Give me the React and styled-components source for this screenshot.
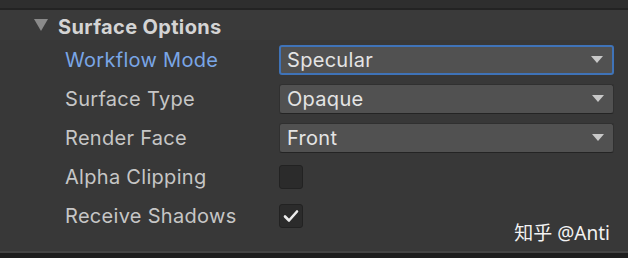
import React from "react";
import styled, { createGlobalStyle } from "styled-components";

const Global = createGlobalStyle`
  html, body { margin: 0; padding: 0; background: #383838; }
  body { font-family: Inter, "Noto Sans", "Liberation Sans", sans-serif; }
`;

const rows = [
  { label: "Workflow Mode", type: "select", value: "Specular", focused: true },
  { label: "Surface Type", type: "select", value: "Opaque" },
  { label: "Render Face", type: "select", value: "Front" },
  { label: "Alpha Clipping", type: "check", checked: false },
  { label: "Receive Shadows", type: "check", checked: true },
];

function App() {
  return (
    <>
      <Global />
      <Panel>
        <TopStrip />
        <Header>
          <Foldout />
          <Title>Surface Options</Title>
        </Header>
        <Body>
          {rows.map((r) => (
            <Row key={r.label}>
              <Label $active={r.focused}>{r.label}</Label>
              {r.type === "select" ? (
                <Select $focused={r.focused}>
                  <span>{r.value}</span>
                  <Arrow />
                </Select>
              ) : (
                <Check>
                  {r.checked && (
                    <svg width="16" height="14" viewBox="0 0 16 14">
                      <path
                        d="M2 7.5 L6 11.5 L14 2.5"
                        fill="none"
                        stroke="#ececec"
                        strokeWidth="2.6"
                        strokeLinecap="round"
                        strokeLinejoin="round"
                      />
                    </svg>
                  )}
                </Check>
              )}
            </Row>
          ))}
          <Watermark>知乎 @Anti</Watermark>
        </Body>
        <BottomStrip />
      </Panel>
    </>
  );
}

export default App;

const Panel = styled.div`
  width: 628px;
  height: 258px;
  display: flex;
  flex-direction: column;
  background: #383838;
  overflow: hidden;
`;

const TopStrip = styled.div`
  height: 8px;
  background: #2e2e2e;
  border-bottom: 2px solid #232323;
`;

const Header = styled.div`
  height: 30px;
  box-sizing: border-box;
  padding-top: 3px;
  display: flex;
  align-items: center;
  padding-left: 34px;
  background: #3a3a3a;
`;

const Foldout = styled.div`
  width: 0;
  height: 0;
  border-left: 7px solid transparent;
  border-right: 7px solid transparent;
  border-top: 12px solid #8a8a8a;
  margin-right: 10px;
  margin-top: -3px;
`;

const Title = styled.div`
  font-size: 20px;
  font-weight: 700;
  color: #d4d4d4;
  letter-spacing: 0.35px;
`;

const Body = styled.div`
  flex: 1;
  display: flex;
  flex-direction: column;
  padding: 0 14px 0 65px;
  position: relative;
`;

const Row = styled.div`
  height: 39px;
  display: flex;
  align-items: center;
`;

const Label = styled.div`
  width: 214px;
  font-size: 20px;
  letter-spacing: 0.3px;
  color: ${(p) => (p.$active ? "#7aa6e6" : "#c6c6c6")};
  white-space: nowrap;
`;

const Select = styled.div`
  flex: 1;
  height: 30px;
  box-sizing: border-box;
  display: flex;
  align-items: center;
  justify-content: space-between;
  padding: 0 9px 0 6px;
  background: #515151;
  border-radius: 3px;
  border: ${(p) => (p.$focused ? "2px solid #3f73b8" : "1px solid #303030")};
  border-bottom-color: ${(p) => (p.$focused ? "#3f73b8" : "#242424")};
  font-size: 20px;
  letter-spacing: 0.3px;
  color: #e4e4e4;
  span {
    margin-left: ${(p) => (p.$focused ? "0" : "1px")};
  }
`;

const Arrow = styled.div`
  width: 0;
  height: 0;
  border-left: 6px solid transparent;
  border-right: 6px solid transparent;
  border-top: 7px solid #c8c8c8;
`;

const Check = styled.div`
  width: 24px;
  height: 24px;
  box-sizing: border-box;
  border-radius: 3px;
  background: #2b2b2b;
  border: 1px solid #222;
  display: flex;
  align-items: center;
  justify-content: center;
`;

const Watermark = styled.div`
  position: absolute;
  right: 18px;
  bottom: 5px;
  font-family: "Noto Sans", "Noto Sans CJK SC", sans-serif;
  font-size: 19px;
  color: #f2f2f2;
`;

const BottomStrip = styled.div`
  height: 5px;
  border-top: 2px solid #454545;
  background: #1e1e1e;
`;
